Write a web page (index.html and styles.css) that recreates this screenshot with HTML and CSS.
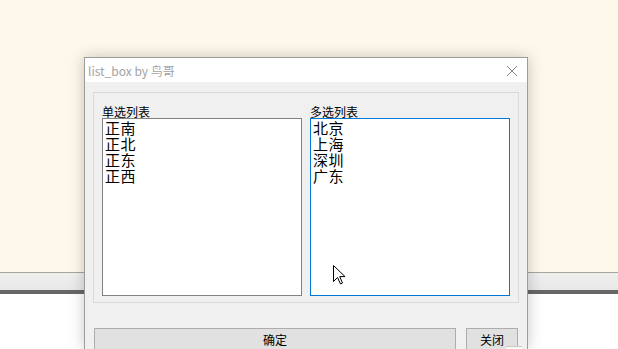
FILE: index.html
```html
<!DOCTYPE html>
<html lang="zh-CN">
<head>
<meta charset="UTF-8" />
<title>list_box by 鸟哥</title>
<link rel="stylesheet" href="styles.css">
</head>
<body>

<div class="desktop">
  <div class="window">
    <div class="titlebar">
      <span class="title">list_box by 鸟哥</span>
      <svg class="close" width="12" height="12" viewBox="0 0 12 12">
        <path d="M1 1 L11 11 M11 1 L1 11" stroke="#8a8a8a" stroke-width="1" fill="none" />
      </svg>
    </div>

    <div class="client">
      <div class="group">
        <div class="col">
          <div class="caption">单选列表</div>
          <ul class="listbox">
            <li>正南</li>
            <li>正北</li>
            <li>正东</li>
            <li>正西</li>
          </ul>
        </div>
        <div class="col">
          <div class="caption">多选列表</div>
          <ul class="listbox focused">
            <li>北京</li>
            <li>上海</li>
            <li>深圳</li>
            <li>广东</li>
          </ul>
        </div>
      </div>

      <div class="buttons">
        <button class="btn btn-ok">确定</button>
        <button class="btn btn-close">关闭</button>
      </div>
    </div>
  </div>

  <div class="tip-edge"></div>

  <svg class="cursor" width="13" height="20" viewBox="0 0 13 20">
    <path d="M0.5 0.5 L0.5 16.5 L4.5 12.5 L7.5 19 L9.5 18 L6.7 11.6 L12 11.6 Z" fill="#fff" stroke="#000" stroke-width="1" />
  </svg>
</div>

</body>
</html>
```

FILE: styles.css
```css
/* 桌面背景 */
html, body {
  margin: 0;
  padding: 0;
}
body {
  width: 618px;
  height: 349px;
  overflow: hidden;
  font-family: "Noto Sans CJK SC", "DejaVu Sans", sans-serif;
  background: linear-gradient(to bottom,
    #fdf8e9 0, #fdf8e9 272px,
    #a8a59c 272px, #a8a59c 273px,
    #efefef 273px, #e8e8e8 290px,
    #666666 290px, #666666 294px,
    #ffffff 294px);
}
.desktop {
  position: relative;
  width: 618px;
  height: 349px;
  overflow: hidden;
}

/* 窗口 (底部被截掉) */
.window {
  position: absolute;
  left: 84px;
  top: 57px;
  width: 442px;
  height: 291px;
  overflow: hidden;
  border: 1px solid #9c9c9c;
  border-bottom: none;
  background-color: #f0f0f0;
  box-shadow: 0 0 14px rgba(0, 0, 0, 0.22);
}
.titlebar {
  height: 24px;
  background-color: #fff;
  display: flex;
  align-items: center;
  justify-content: space-between;
  padding: 0 9px 0 3px;
}
.title {
  font-size: 12px;
  color: #a3a3a3;
  line-height: 12px;
  margin-top: 1px;
}
.close {
  display: block;
  margin-top: 1px;
}

.client {
  padding: 10px 8px 0 8px;
}

/* 分组框 */
.group {
  display: flex;
  gap: 8px;
  height: 197px;
  border: 1px solid #dadada;
  padding: 12px 7px 0 8px;
}
.col {
  display: flex;
  flex-direction: column;
  width: 200px;
}
.caption {
  font-size: 12px;
  line-height: 13px;
  height: 13px;
  color: #000;
}
.listbox {
  list-style: none;
  margin: 0;
  padding: 1px 2px;
  height: 174px;
  border: 1px solid #828282;
  background-color: #fff;
  overflow: hidden;
}
.listbox.focused {
  border-color: #0078d7;
}
.listbox li {
  font-size: 15px;
  line-height: 16px;
  height: 16px;
  color: #000;
  letter-spacing: 0.5px;
}

/* 按钮 */
.buttons {
  display: flex;
  justify-content: space-between;
  margin-top: 25px;
  padding: 0 1px;
}
.btn {
  font-family: "Noto Sans CJK SC", sans-serif;
  font-size: 12px;
  height: 23px;
  padding: 0;
  border: 1px solid #adadad;
  background-color: #e1e1e1;
  color: #000;
}
.btn-ok {
  width: 362px;
}
.btn-close {
  width: 52px;
}

.tip-edge {
  position: absolute;
  left: 506px;
  top: 346px;
  width: 16px;
  height: 3px;
  border-top: 1px solid #c8c8c8;
  background-color: #f8f8f8;
}

.cursor {
  position: absolute;
  left: 333px;
  top: 265px;
}
```
